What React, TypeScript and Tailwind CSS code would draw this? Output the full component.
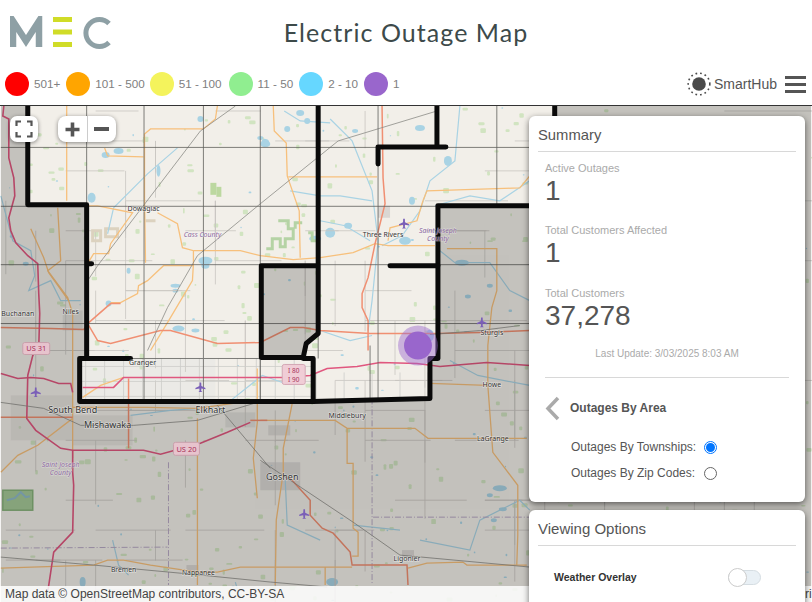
import React from "react";

const FONT = { fontFamily: '"Liberation Sans", Arial, sans-serif' };

function rng(seed: number) {
  let s = seed;
  return () => {
    s = (s * 16807) % 2147483647;
    return s / 2147483647;
  };
}

const OUTSIDE =
  "M0 105H27V204H85V357H79V402H313V401L430 398V358H438V205H555V105H812V602H0Z";
const GRAYBOX = "M262 265H318V333L307 343L303 357H260Z";

const ORANGE = [
  "M217 105L215 118L203 128H150L144 133V197L145 262",
  "M66 105V200",
  "M104 147L107 155L143 156",
  "M273 105L274 130L286 142L287 175L299 210L300 257",
  "M288 176H377",
  "M87 205H97L132 212L110 243L108 253H93L87 263",
  "M157 212L177 223L182 247L193 250L193 263L192 280L167 322L150 350",
  "M193 250L213 250H240L260 255L293 259L320 257L353 252L375 243L388 245H435",
  "M193 265H163L147 280L138 285L137 293L120 302H110",
  "M423 200L417 220L390 227L388 240",
  "M423 200L427 190L520 187L530 175",
  "M57 207L60 260L47 270L67 297L72 313L72 458",
  "M30 228L43 257L48 272L68 300",
  "M447 248H497V290L492 307L488 345V385L493 452L518 485V535L517 565",
  "M430 383L487 385",
  "M260 420H335L347 428H415L428 438H527",
  "M347 428V463H353V528L358 532V556H352",
  "M292 403L283 448V472L276 520L275 585",
  "M408 568L427 563L463 562L467 565H527",
  "M325 567V585",
  "M197 418V585",
  "M253 458L257 498M253 458L257 422V368",
  "M0 472L17 455L37 445L72 418",
  "M72 407H113L147 407L197 408L240 402",
  "M0 568L93 565L107 560H123L150 565L197 572H217L240 567H352",
  "M82 397L100 385L123 377",
];
const PINK = [
  "M3 105L2 115L8 118V157L13 177L14 195L8 217L10 230L15 242L27 255L37 263L38 293L39 313L38 347L32 355L27 375L26 418L35 430L60 448L72 450H130L143 450L160 454L200 443L227 432L250 422",
  "M0 373L17 378L30 377L43 378L58 383H70L72 392",
  "M72 450V472L73 485L72 532L53 552L50 572L47 592",
  "M82 387H113L123 377H177L253 377H283L310 375L327 368L357 366L380 362L417 363L440 366L487 362L530 365",
];
const SALMON = [
  "M0 327L50 328L83 329L87 323L97 340L110 343L160 330H170L217 343L260 342L290 327H303L320 330L370 333H437L480 332L530 330",
  "M87 323L110 303H120",
  "M382 105L383 177L385 203L375 243L368 277L362 293V307L368 320V350",
  "M290 478L310 500V515L322 528L333 533L350 552L352 565H407L408 585",
  "M0 417H27H72",
  "M128 378V448",
  "M250 420H267",
];
const RAIL = [
  "M235 105L200 130L97 265L85 283",
  "M437 110L338 140L260 203L197 255L167 307L147 350",
  "M0 402L43 408L80 425H133L197 420L257 402",
  "M217 405L270 468",
  "M260 460L293 482L353 522L400 555L530 567",
  "M0 557L93 565L200 575L270 582L327 587",
  "M430 334L480 330L520 325",
];
const RIVERS = [
  "M177 147L147 173L113 207L107 233",
  "M330 118L352 140L372 190L378 240L372 300L368 330",
  "M460 105L455 160L430 180L420 210L402 235L382 245",
  "M330 122L300 120L284 110",
  "M435 205L470 195L500 200L530 180",
  "M290 190L320 195L340 195L372 200",
  "M320 220L345 225L370 240",
  "M440 250L455 262L490 262L510 290L530 300",
  "M0 195L12 240L30 250L34 275L28 290L50 280L60 300L80 300",
  "M320 330L350 340L372 335",
  "M450 360L478 375L530 385",
  "M228 402L262 375L285 383",
  "M130 415L170 410L197 408",
  "M285 480L287 525L320 540",
  "M353 525L400 530",
  "M420 540L470 550L480 520L520 500L530 510",
  "M235 582L240 600",
  "M112 540L118 565L128 575",
];
const WATER: [number, number, number, number][] = [
  [91, 197, 4, 5], [105, 154, 4, 3], [118, 150, 5, 3], [200, 118, 3, 3], [158, 170, 2, 6],
  [205, 260, 7, 4], [205, 265, 4, 3], [178, 328, 6, 3], [195, 330, 4, 2], [108, 303, 3, 3],
  [175, 285, 5, 2], [265, 142, 4, 4], [265, 143, 5, 3], [287, 128, 3, 3], [307, 120, 3, 3],
  [260, 137, 3, 2], [300, 112, 4, 3], [420, 127, 5, 3], [448, 160, 4, 5], [330, 232, 5, 5],
  [355, 130, 3, 2], [315, 238, 6, 3], [348, 225, 4, 3], [412, 200, 3, 4], [405, 240, 6, 4],
  [430, 335, 4, 6], [462, 262, 7, 3], [490, 285, 3, 2], [468, 296, 3, 2], [500, 488, 7, 3],
  [503, 509, 4, 2], [490, 495, 3, 2], [494, 520, 3, 2], [332, 582, 6, 4], [82, 582, 3, 5],
  [128, 270, 2, 3], [175, 290, 3, 2], [25, 263, 3, 2],
];
const PLANES: [number, number][] = [[404, 223], [482, 322], [35, 392], [200, 387], [304, 514]];
const LABELS: [string, number, number, number][] = [
  ["Dowagiac", 143, 210, 7],
  ["Buchanan", 17, 315, 7],
  ["Niles", 70, 313, 7],
  ["Three Rivers", 383, 236, 7],
  ["Sturgis", 492, 334, 7],
  ["Granger", 142, 365, 7],
  ["South Bend", 72, 413, 9],
  ["Mishawaka", 107, 428, 9],
  ["Elkhart", 210, 413, 9],
  ["Howe", 492, 387, 7],
  ["Middlebury", 347, 418, 7],
  ["LaGrange", 493, 441, 7],
  ["Goshen", 282, 480, 9],
  ["Ligonier", 407, 561, 7],
  ["Bremen", 123, 572, 6.8],
  ["Nappanee", 198, 575, 6.8],
];
const COUNTY: [string, number, number][] = [
  ["Cass County", 202, 236],
  ["Saint Joseph", 438, 232],
  ["County", 438, 240],
  ["Saint Joseph", 60, 467],
  ["County", 60, 475],
];

function MapArt() {
  const r = rng(4711);
  const green = Array.from({ length: 420 }, () => ({
    x: r() * 812, y: 105 + r() * 497, w: 1.5 + r() * 5, h: 1.5 + r() * 4,
  }));
  const blue = Array.from({ length: 90 }, () => ({
    x: r() * 812, y: 105 + r() * 497, w: 1 + r() * 2.5, h: 1 + r() * 1.5,
  }));
  const sec: string[] = [];
  for (let i = 0; i < 170; i++) {
    const x = Math.round(r() * 27) * 30 + 5;
    const y = Math.round(r() * 16) * 30 + 110;
    const l = 30 + r() * 60;
    sec.push(r() > 0.5 ? `M${x} ${y}h${l}` : `M${x} ${y}v${l}`);
  }
  const urban: string[] = [];
  for (let x = 85; x < 312; x += 19) urban.push(`M${x} 358V400`);
  for (let y = 366; y < 400; y += 15) urban.push(`M80 ${y}H312`);
  for (let x = 316; x < 430; x += 28) urban.push(`M${x} 372V398`);
  return (
    <svg className="absolute inset-0 h-full w-full" viewBox="0 105 812 497" aria-hidden="true">
      <rect x="0" y="105" width="812" height="497" fill="#f2efe9" />
      <g className="blur-[0.5px]">
        <path d="M80 358H215V400H80Z" fill="#ebeae6" />
        <g fill="#c4e0b0" opacity="0.7">
          {green.map((g, i) => (
            <rect key={i} x={g.x} y={g.y} width={g.w} height={g.h} rx="1" />
          ))}
        </g>
        <g fill="#a9d3e4">
          {blue.map((g, i) => (
            <rect key={i} x={g.x} y={g.y} width={g.w} height={g.h} rx="1" />
          ))}
          {WATER.map(([x, y, a, b], i) => (
            <ellipse key={i} cx={x} cy={y} rx={a} ry={b} />
          ))}
        </g>
        <g fill="none" stroke="#c9c7c2" strokeWidth="0.8">
          {sec.map((d, i) => (
            <path key={i} d={d} />
          ))}
        </g>
        <path d={urban.join("")} fill="none" stroke="#cdcdc9" strokeWidth="0.8" />
        <g fill="#c9c7c4">
          <rect x="10" y="395" width="62" height="45" opacity="0.3" />
          <rect x="72" y="415" width="60" height="30" opacity="0.3" />
          <rect x="225" y="412" width="30" height="15" opacity="0.4" />
          <rect x="260" y="462" width="40" height="28" opacity="0.55" />
          <rect x="268" y="425" width="22" height="10" opacity="0.5" />
          <rect x="62" y="310" width="20" height="20" opacity="0.4" />
          <rect x="402" y="550" width="12" height="8" opacity="0.6" />
          <rect x="186" y="565" width="12" height="6" opacity="0.6" />
          <rect x="378" y="205" width="12" height="12" opacity="0.6" />
        </g>
        <g fill="none" stroke="#dcd2bf" strokeWidth="3">
          <path d="M92 230h8v10h-8zM105 228h12v8h-12z" />
          <path d="M145 220h10" />
        </g>
        <rect x="210" y="182" width="6" height="12" fill="#bcd8a0" />
        <rect x="216" y="186" width="5" height="10" fill="#bcd8a0" />
        <g fill="none" stroke="#b5d3a5" strokeWidth="3" transform="translate(6 0)">
          <path d="M272 220h10v8h5v10h-8v8h-5v-8h-8v10h-6M296 222h-7v6M312 222v18h-6v-8h-4" />
        </g>
        <rect x="2" y="490" width="30" height="20" fill="#a5c998" stroke="#88b37c" strokeWidth="1.5" />
        <path d="M6 500l8-2 6-6 5 5 4-1" fill="none" stroke="#8fb9c9" strokeWidth="2" />
        <g fill="none" stroke="#a9d3e4" strokeWidth="1.2">
          {RIVERS.map((d, i) => (
            <path key={i} d={d} />
          ))}
        </g>
        <g fill="none" stroke="#b7a9c4" strokeWidth="1" strokeDasharray="6 2 1 2">
          <path d="M0 548L167 547M168 462V585M372 398V585M373 517H530" />
        </g>
        <g fill="none" stroke="#f7c07c" strokeWidth="1.3">
          {ORANGE.map((d, i) => (
            <path key={i} d={d} />
          ))}
        </g>
        <g fill="none" stroke="#f08f72" strokeWidth="1.5">
          {SALMON.map((d, i) => (
            <path key={i} d={d} />
          ))}
        </g>
        <g fill="none" stroke="#e0577f" strokeWidth="1.6">
          {PINK.map((d, i) => (
            <path key={i} d={d} />
          ))}
        </g>
        <g fill="none" stroke="#8b8b86" strokeWidth="0.8">
          {RAIL.map((d, i) => (
            <path key={i} d={d} />
          ))}
        </g>
      </g>
      <g fill="none" stroke="#5f5f5c" strokeWidth="1" opacity="0.8">
        <path d="M0 146.500H530M0 205.500H530M0 264H530M0 323H530M86 105V357M143.500 105V400M203 105V400M260 105V400M318 105V358M378 105V398M497 105V205" />
        <path d="M80 358H313M260 400V358M370 345V398" />
      </g>
      <g fill="#000" opacity="0.19">
        <path d={OUTSIDE} />
        <path d={GRAYBOX} />
      </g>
      <g fill="none" stroke="#0a0a0a" strokeWidth="5" strokeLinecap="round" strokeLinejoin="round">
        <path d="M27 105V204H86V357M79 358H130M79 358V401H313L430 398V358H438V205H530M555 105V115" />
        <path d="M318 105V333L306 343L303 357H261V265H318M303 358H313V401" />
        <path d="M437 105V146M378 163V146H446M390 265H438M87 263H91" />
      </g>
      <g>
        {LABELS.map(([t, x, y, s]) => (
          <text
            key={t}
            x={x}
            y={y}
            textAnchor="middle"
            fontSize={s}
            fill="#333"
            stroke="#fff"
            strokeOpacity="0.5"
            strokeWidth="1.2"
            paintOrder="stroke"
            style={{ fontFamily: '"Noto Sans", sans-serif' }}
          >
            {t}
          </text>
        ))}
        {COUNTY.map(([t, x, y], i) => (
          <text
            key={i}
            x={x}
            y={y}
            textAnchor="middle"
            fontSize="7"
            fontStyle="italic"
            fill="#8d6a9f"
            stroke="#fff"
            strokeOpacity="0.4"
            strokeWidth="1"
            paintOrder="stroke"
            style={{ fontFamily: '"Noto Sans", sans-serif' }}
          >
            {t}
          </text>
        ))}
      </g>
      {PLANES.map(([x, y], i) => (
        <path
          key={i}
          transform={`translate(${x} ${y})`}
          d="M-.8-5H.8L1-1.500L5 .5V1.800L1 1L.8 3.500L2 4.700H-2L-.8 3.500L-1 1L-5 1.800V.5L-1-1.500Z"
          fill="#7a5fb8"
        />
      ))}
      <g style={{ fontFamily: '"Noto Sans", sans-serif' }} fontSize="7.5" textAnchor="middle">
        <rect x="22" y="342" width="27" height="12" rx="2" fill="#e7c3cd" stroke="#c9a0ac" />
        <text x="35.500" y="351" fill="#a8325a">US 31</text>
        <rect x="173" y="442" width="26" height="13" rx="2" fill="#e7c3cd" stroke="#c9a0ac" />
        <text x="186" y="451.500" fill="#a8325a">US 20</text>
        <rect x="282" y="364" width="23" height="20" rx="2" fill="#f0cdd6" stroke="#d3a8b5" />
        <text x="293.500" y="373" fill="#a8325a" fontSize="6.500">I 80</text>
        <text x="293.500" y="381.500" fill="#a8325a" fontSize="6.500">I 90</text>
      </g>
      <circle cx="418" cy="345" r="20" fill="#9966cc" opacity="0.45" />
      <circle cx="418" cy="345" r="14" fill="#9966cc" />
    </svg>
  );
}

function Logo() {
  return (
    <svg width="102" height="34" viewBox="0 0 102 34" className="block" aria-label="MEC">
      <path d="M3 31V5L16 25L29 5V31" fill="none" stroke="#8ea0a5" strokeWidth="6.500" strokeLinejoin="miter" />
      <rect x="43" y="1" width="19" height="5" fill="#d0dc28" />
      <rect x="43" y="13.500" width="19" height="5" fill="#d0dc28" />
      <rect x="43" y="26" width="19" height="5" fill="#d0dc28" />
      <path d="M99 7.500A13.500 13.500 0 1 0 99 26.500" fill="none" stroke="#8ea0a5" strokeWidth="5" />
    </svg>
  );
}

function Legend({ color, label, gap }: { color: string; label: string; gap: string }) {
  return (
    <div className={`flex items-center gap-[5px] ${gap}`}>
      <span className="h-6 w-6 rounded-full" style={{ backgroundColor: color }} />
      <span className="whitespace-nowrap text-[11.700px] text-[#808080]">{label}</span>
    </div>
  );
}

function Sun() {
  return (
    <svg width="24" height="24" viewBox="0 0 24 24" aria-hidden="true">
      <circle cx="12" cy="12" r="6.800" fill="#4a4a4a" />
      <circle cx="12" cy="12" r="10.800" fill="none" stroke="#4a4a4a" strokeWidth="1.600" strokeDasharray="1.700 3" />
    </svg>
  );
}

function Stat({ label, value, mb }: { label: string; value: string; mb: string }) {
  return (
    <div className={mb}>
      <div className="text-[11px] leading-[13px] text-[#aaa]">{label}</div>
      <div className="text-[28px] leading-[31px] text-[#555]">{value}</div>
    </div>
  );
}

export default function App() {
  return (
    <div className="flex h-[602px] w-[812px] flex-col overflow-hidden bg-white" style={FONT}>
      <header className="h-[105px] shrink-0">
        <div className="relative flex h-[64px] items-start justify-center">
          <div className="absolute top-[16px] left-[10px]">
            <Logo />
          </div>
          <h1
            className="mt-[16px] text-[25px] leading-[32px] font-normal tracking-[1.050px] text-[#3d4a4a]"
            style={{ fontFamily: "Lato, sans-serif" }}
          >
            Electric Outage Map
          </h1>
        </div>
        <div className="flex h-[40px] items-start justify-between pt-[8px] pr-[6px] pl-[5px]">
          <div className="flex">
            <Legend color="#ff0000" label="501+" gap="mr-[6px]" />
            <Legend color="#ffa500" label="101 - 500" gap="mr-[5px]" />
            <Legend color="#f4f35c" label="51 - 100" gap="mr-[7px]" />
            <Legend color="#90ee90" label="11 - 50" gap="mr-[6px]" />
            <Legend color="#66d7ff" label="2 - 10" gap="mr-[6px]" />
            <Legend color="#9966cc" label="1" gap="" />
          </div>
          <div className="flex items-center">
            <Sun />
            <span className="ml-[3px] text-[14px] text-[#555]">SmartHub</span>
            <div className="ml-[8px] flex h-[17px] w-[21px] flex-col justify-between">
              <span className="h-[3px] bg-[#555]" />
              <span className="h-[3px] bg-[#555]" />
              <span className="h-[3px] bg-[#555]" />
            </div>
          </div>
        </div>
      </header>

      <main className="relative flex-1 overflow-hidden border-t border-[#333]">
        <MapArt />

        <button className="absolute top-[10px] left-[10px] flex h-[26px] w-[28px] items-center justify-center rounded-[7px] bg-white shadow-[0_1px_4px_rgba(0,0,0,0.45)]">
          <svg width="18" height="18" viewBox="0 0 18 18" fill="none" stroke="#555" strokeWidth="2.200">
            <path d="M1.500 6V1.500H6M12 1.500H16.500V6M16.500 12V16.500H12M6 16.500H1.500V12" />
          </svg>
        </button>
        <div className="absolute top-[10px] left-[58px] flex h-[26px] w-[58px] overflow-hidden rounded-[8px] bg-white shadow-[0_1px_4px_rgba(0,0,0,0.45)]">
          <button className="flex flex-1 items-center justify-center border-r border-[#ccc]">
            <svg width="15" height="15" viewBox="0 0 15 15" fill="#555">
              <path d="M5.700 0.500H9.300V5.700H14.500V9.300H9.300V14.500H5.700V9.300H0.500V5.700H5.700Z" />
            </svg>
          </button>
          <button className="flex flex-1 items-center justify-center">
            <svg width="15" height="4" viewBox="0 0 15 4" fill="#555">
              <rect width="15" height="4" />
            </svg>
          </button>
        </div>

        <div className="absolute right-0 bottom-0 left-0 h-[16px] bg-white/85 pl-[5px] text-[12px] leading-[16px] text-[#444]">
          Map data © OpenStreetMap contributors, CC-BY-SA
          <span className="absolute top-0 left-[805px]">ri</span>
        </div>

        <section className="absolute top-[10px] left-[529px] h-[386px] w-[276px] rounded-[6px] bg-white px-[9px] pt-[10px] shadow-[0_2px_6px_rgba(0,0,0,0.55)]">
          <h2 className="border-b border-[#d8d8d8] pb-[6px] text-[14.800px] leading-[19px] text-[#555]">Summary</h2>
          <div className="px-[7px] pt-[10px]">
            <Stat label="Active Outages" value="1" mb="mb-[18px]" />
            <Stat label="Total Customers Affected" value="1" mb="mb-[19px]" />
            <Stat label="Total Customers" value="37,278" mb="mb-[16px]" />
            <div className="text-center text-[10px] leading-[14px] text-[#aaa]">Last Update: 3/03/2025 8:03 AM</div>
            <div className="mt-[16px] border-t border-[#d8d8d8]" />
            <div className="mt-[17px] flex h-[26px] items-center">
              <svg width="15" height="25" viewBox="0 0 15 25" fill="none" stroke="#aaa" strokeWidth="3.500">
                <path d="M13 2L3 12.500L13 23" />
              </svg>
              <span className="ml-[10px] text-[12px] font-bold text-[#555]">Outages By Area</span>
            </div>
            <div className="mt-[13px] flex h-[26px] items-center pl-[26px]">
              <span className="w-[133px] text-[12px] text-[#555]">Outages By Townships:</span>
              <span className="flex h-[13px] w-[13px] items-center justify-center rounded-full border border-[#0075ff]">
                <span className="h-[9px] w-[9px] rounded-full bg-[#0075ff]" />
              </span>
            </div>
            <div className="flex h-[26px] items-center pl-[26px]">
              <span className="w-[133px] text-[12px] text-[#555]">Outages By Zip Codes:</span>
              <span className="h-[13px] w-[13px] rounded-full border border-[#666]" />
            </div>
          </div>
        </section>

        <section className="absolute top-[404px] left-[529px] h-[120px] w-[276px] rounded-[6px] bg-white px-[9px] pt-[9px] shadow-[0_2px_6px_rgba(0,0,0,0.55)]">
          <h2 className="border-b border-[#d8d8d8] pb-[6px] text-[15px] leading-[20px] text-[#555]">Viewing Options</h2>
          <div className="mt-[24px] flex items-center pl-[16px]">
            <span className="w-[174px] text-[10.500px] font-bold text-[#333]">Weather Overlay</span>
            <span className="relative h-[15px] w-[33px] rounded-full border border-[#d5dde2] bg-[#e9f0f5]">
              <span className="absolute top-[-3px] left-[-1px] h-[19px] w-[19px] rounded-full border border-[#ccc] bg-white" />
            </span>
          </div>
        </section>
      </main>
    </div>
  );
}
